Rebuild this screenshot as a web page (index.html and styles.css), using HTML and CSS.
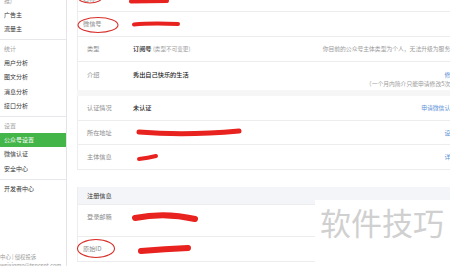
FILE: index.html
```html
<!DOCTYPE html>
<html lang="zh-CN">
<head>
<meta charset="utf-8">
<title>公众号设置</title>
<link rel="stylesheet" href="styles.css">
</head>
<body>
<div class="page">
  <aside class="sidebar">
    <div class="group">
      <div class="group-title">推广</div>
      <a class="nav-item">广告主</a>
      <a class="nav-item">流量主</a>
    </div>
    <div class="group">
      <div class="group-title">统计</div>
      <a class="nav-item">用户分析</a>
      <a class="nav-item">图文分析</a>
      <a class="nav-item">消息分析</a>
      <a class="nav-item">接口分析</a>
    </div>
    <div class="group">
      <div class="group-title">设置</div>
      <a class="nav-item active">公众号设置</a>
      <a class="nav-item">微信认证</a>
      <a class="nav-item">安全中心</a>
    </div>
    <div class="group">
      <a class="nav-item">开发者中心</a>
    </div>
    <div class="side-footer">
      <p>中心 | 侵权投诉</p>
      <p>weixinmp@tencent.com</p>
    </div>
  </aside>

  <main class="main">
    <section class="card">
      <div class="row"><span class="label shift">名称</span><span class="value"></span></div>
      <div class="row"><span class="label shift">微信号</span><span class="value"></span></div>
      <div class="row">
        <span class="label">类型</span>
        <span class="value strong">订阅号 <span class="hint">(类型不可变更)</span></span>
        <span class="note">你目前的公众号主体类型为个人，无法升级为服务号</span>
      </div>
      <div class="row intro">
        <span class="label">介绍</span>
        <span class="value strong">秀出自己快乐的生活</span>
        <span class="side">
          <span class="link">修改</span>
          <span class="note small">（一个月内简介只能申请修改5次）</span>
        </span>
      </div>
    </section>
    <div class="band"></div>
    <section class="card">
      <div class="row">
        <span class="label">认证情况</span>
        <span class="value strong">未认证</span>
        <span class="link right">申请微信认证</span>
      </div>
      <div class="row short">
        <span class="label">所在地址</span>
        <span class="value"></span>
        <span class="link right">设置</span>
      </div>
      <div class="row">
        <span class="label">主体信息</span>
        <span class="value"></span>
        <span class="link right">详情</span>
      </div>
    </section>
    <section class="card reg">
      <div class="card-head">注册信息</div>
      <div class="row tall"><span class="label">登录邮箱</span><span class="value"></span></div>
      <div class="row"><span class="label shift">原始ID</span><span class="value"></span></div>
    </section>
  </main>

  <svg class="marks" width="450" height="266" viewBox="0 0 450 266">
    <g fill="none" stroke="#d8302b" stroke-width="1.1">
      <ellipse cx="90" cy="-3" rx="12" ry="6"/>
      <ellipse cx="98" cy="25" rx="20" ry="7.5"/>
      <ellipse cx="96" cy="248.5" rx="18.5" ry="9"/>
    </g>
    <g fill="none" stroke="#e8221f" stroke-linecap="round" stroke-linejoin="round">
      <path d="M131 1.5 L167 1" stroke-width="4"/>
      <path d="M134 24.5 Q150 23 178 24" stroke-width="4"/>
      <path d="M139 132 Q185 136 239 131" stroke-width="5"/>
      <path d="M139 159 Q148 158 156 156" stroke-width="4"/>
      <path d="M135 218 Q165 212 195 219" stroke-width="6"/>
      <path d="M141 251 Q165 249 188 248" stroke-width="6"/>
    </g>
  </svg>

  <div class="watermark">软件技巧</div>
</div>
</body>
</html>
```

FILE: styles.css
```css
html, body {
  margin: 0;
  width: 450px;
  height: 266px;
  overflow: hidden;
  background: #fff;
  font-family: "Noto Sans CJK SC", "Noto Sans", sans-serif;
}

.page {
  position: relative;
  display: flex;
  align-items: flex-start;
  width: 450px;
  height: 266px;
  overflow: hidden;
}

/* ---------- sidebar ---------- */
.sidebar {
  flex: none;
  width: 66px;
  height: 277.3px;
  margin-top: -8.3px;
  border-right: 1px solid #e4e4e6;
  display: flex;
  flex-direction: column;
  font-size: 6px;
}

.group {
  padding: 2px 0 2.5px;
}

.group + .group {
  border-top: 1px solid #e7e7eb;
}

.group-title {
  height: 14px;
  line-height: 14px;
  padding-left: 4px;
  color: #a3a3a3;
}

.nav-item {
  display: block;
  height: 14.4px;
  line-height: 14.4px;
  padding-left: 4px;
  color: #333;
}

.nav-item.active {
  background: #44b549;
  color: #fff;
}

.side-footer {
  margin-top: auto;
  color: #9a9a9a;
  font-size: 5.4px;
}

.side-footer p {
  margin: 0;
  height: 8px;
  line-height: 8px;
  white-space: nowrap;
}

/* ---------- main ---------- */
.main {
  flex: none;
  width: 390px;
  margin-left: 10px;
  margin-top: -13px;
}

.card {
  border-left: 1px solid #ededed;
}

.row {
  display: flex;
  align-items: center;
  box-sizing: border-box;
  height: 25px;
  padding: 0 11px 0 9px;
  border-bottom: 1px solid #ededed;
  font-size: 6.2px;
  line-height: 10px;
  white-space: nowrap;
}

.row.short {
  height: 24px;
}

.row.intro {
  height: 28px;
  align-items: flex-start;
  padding-top: 8px;
  border-bottom: none;
}

.row.tall {
  height: 32px;
  align-items: flex-start;
  padding-top: 7px;
}

.label {
  flex: none;
  width: 46px;
  color: #8c8c8c;
}

.label.shift {
  width: 50px;
  margin-left: -4px;
}

.value {
  color: #222;
}

.value.strong {
  font-weight: 500;
}

.hint {
  color: #9d9d9d;
  font-weight: 400;
  font-size: 5.6px;
}

.note {
  margin-left: auto;
  color: #9b9b9b;
  font-size: 5.8px;
}

.side {
  margin-left: auto;
  display: flex;
  flex-direction: column;
  align-items: flex-end;
}

.note.small {
  line-height: 8px;
}

.link {
  color: #5a8fd6;
  font-size: 5.8px;
}

.link.right {
  margin-left: auto;
}

.band {
  height: 6px;
  background: #f6f6f7;
}

.card.reg {
  margin-top: 17px;
}

.card-head {
  box-sizing: border-box;
  height: 18px;
  line-height: 18px;
  padding-left: 9px;
  background: #f4f5f8;
  border-bottom: 1px solid #ececec;
  color: #333;
  font-size: 6.2px;
}

/* ---------- overlays ---------- */
.marks {
  position: absolute;
  left: 0;
  top: 0;
  overflow: visible;
  pointer-events: none;
}

.watermark {
  position: absolute;
  left: 315px;
  top: 200px;
  width: 135px;
  height: 66px;
  box-sizing: border-box;
  padding: 5.5px 0 0 5px;
  background: #fff;
  color: #d0d0d0;
  font-size: 31px;
  line-height: 31px;
  white-space: nowrap;
}
```
